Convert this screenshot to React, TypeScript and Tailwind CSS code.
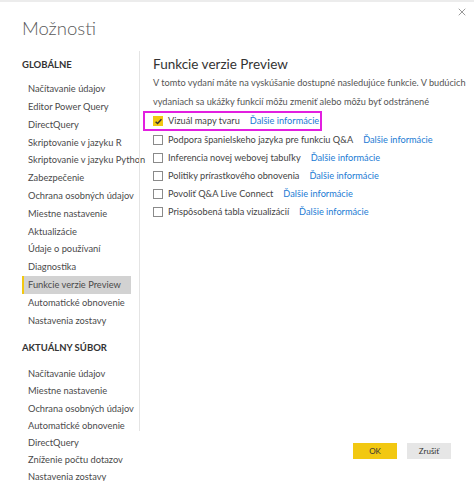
import { X } from "lucide-react";

const globalItems = [
  "Načítavanie údajov",
  "Editor Power Query",
  "DirectQuery",
  "Skriptovanie v jazyku R",
  "Skriptovanie v jazyku Python",
  "Zabezpečenie",
  "Ochrana osobných údajov",
  "Miestne nastavenie",
  "Aktualizácie",
  "Údaje o používaní",
  "Diagnostika",
  "Funkcie verzie Preview",
  "Automatické obnovenie",
  "Nastavenia zostavy",
];

const fileItems = [
  "Načítavanie údajov",
  "Miestne nastavenie",
  "Ochrana osobných údajov",
  "Automatické obnovenie",
  "DirectQuery",
  "Zníženie počtu dotazov",
  "Nastavenia zostavy",
];

const features = [
  { label: "Vizuál mapy tvaru", checked: true },
  { label: "Podpora španielskeho jazyka pre funkciu Q&A", checked: false },
  { label: "Inferencia novej webovej tabuľky", checked: false },
  { label: "Politiky prírastkového obnovenia", checked: false },
  { label: "Povoliť Q&A Live Connect", checked: false },
  { label: "Prispôsobená tabla vizualizácií", checked: false },
];

function NavItem({ label, active, tight }: { label: string; active?: boolean; tight?: boolean }) {
  return (
    <div
      className={`flex items-center pl-[4px] border-l-2 whitespace-nowrap ${
        tight ? "h-[17.2px]" : "h-[17.8px]"
      } ${active ? "bg-[#d2d2d2] border-[#f2c811]" : "border-transparent"}`}
    >
      {label}
    </div>
  );
}

function Checkbox({ checked }: { checked: boolean }) {
  if (checked) {
    return (
      <div className="w-[10px] h-[10px] bg-[#f2c811] flex items-center justify-center shrink-0">
        <svg viewBox="0 0 10 10" className="w-[9px] h-[9px]">
          <path d="M1.8 5.2 L4 7.3 L8.3 2.6" fill="none" stroke="#333" strokeWidth="1.6" />
        </svg>
      </div>
    );
  }
  return <div className="w-[10px] h-[10px] border border-[#8a8a8a] bg-white shrink-0" />;
}

export default function App() {
  return (
    <div
      className="w-[474px] h-[481px] bg-white relative overflow-hidden text-[#4a4a4a]"
      style={{ fontFamily: 'Lato, "Noto Sans", sans-serif' }}
    >
      <div className="h-[2px] bg-[#ececec]" />
      <button className="absolute top-[6px] right-[6px] text-[#777]">
        <X className="w-[12px] h-[12px]" strokeWidth={1.5} />
      </button>

      <h1 className="pl-[22px] pt-[13px] text-[18.5px] font-light text-[#5a5a5a] leading-[26px]">
        Možnosti
      </h1>

      <div className="flex mt-[10px]">
        <div className="w-[139px] shrink-0 pl-[22px] pr-[8px] text-[9.3px]">
          <div className="pt-[7px] pb-[8px] text-[9.5px] font-bold text-[#333]">GLOBÁLNE</div>
          {globalItems.map((item) => (
            <NavItem key={item} label={item} active={item === "Funkcie verzie Preview"} />
          ))}
          <div className="pt-[12px] pb-[10px] text-[9.5px] font-bold text-[#333] whitespace-nowrap">
            AKTUÁLNY SÚBOR
          </div>
          {fileItems.map((item) => (
            <NavItem key={item + "f"} label={item} tight />
          ))}
        </div>

        <div className="flex-1 border-l border-[#e4e4e4] h-[380px] pl-[13px] pr-[8px]">
          <h2 className="text-[13.5px] text-[#333] pt-[4px] leading-[18px] whitespace-nowrap">
            Funkcie verzie Preview
          </h2>
          <p className="text-[9.2px] leading-[19px] text-[#555]">
            V tomto vydaní máte na vyskúšanie dostupné nasledujúce funkcie. V budúcich vydaniach
            sa ukážky funkcií môžu zmeniť alebo môžu byť odstránené
          </p>
          <div className="flex flex-col text-[9.2px] whitespace-nowrap">
            {features.map((f, i) => (
              <div
                key={f.label}
                className={`flex items-center gap-[5px] ${
                  i === 0
                    ? "border-2 border-[#e21fe0] -ml-[10px] pl-[8px] w-[179px] h-[20px]"
                    : "h-[18px]"
                }`}
              >
                <Checkbox checked={f.checked} />
                <span className="text-[#444]">{f.label}</span>
                <a className="ml-[5px] text-[#1b7bd4]">Ďalšie informácie</a>
              </div>
            ))}
          </div>
        </div>
      </div>

      <div className="absolute right-[23px] bottom-[22px] flex gap-[10px] text-[8px]">
        <button className="w-[44px] h-[16px] bg-[#f2c811] text-[#333]">OK</button>
        <button className="w-[44px] h-[16px] bg-[#e6e6e6] text-[#333]">Zrušiť</button>
      </div>
    </div>
  );
}
